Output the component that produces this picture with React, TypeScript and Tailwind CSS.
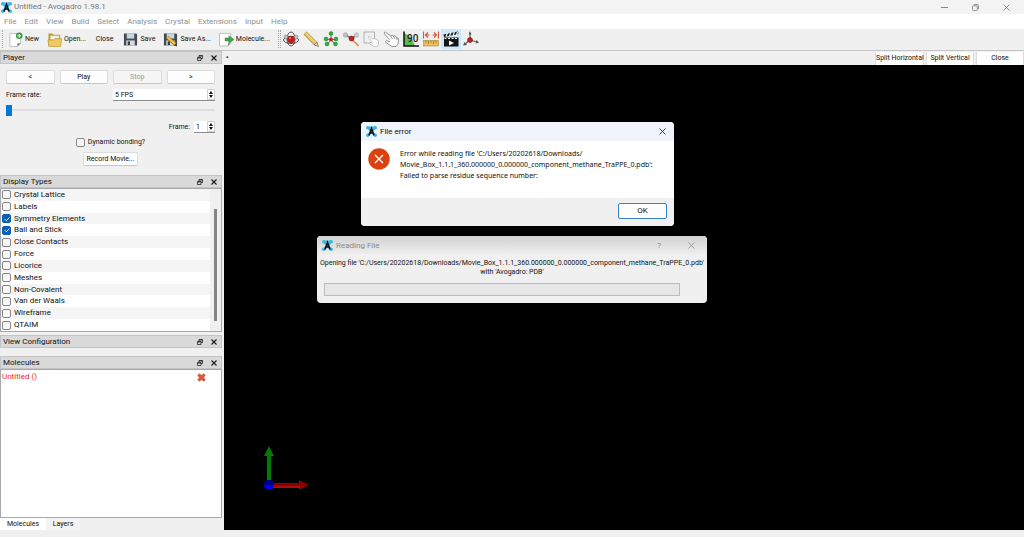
import type { ReactNode } from 'react';

const menus = ['File', 'Edit', 'View', 'Build', 'Select', 'Analysis', 'Crystal', 'Extensions', 'Input', 'Help'];

const displayTypes = [
  { name: 'Crystal Lattice', on: false },
  { name: 'Labels', on: false },
  { name: 'Symmetry Elements', on: true },
  { name: 'Ball and Stick', on: true },
  { name: 'Close Contacts', on: false },
  { name: 'Force', on: false },
  { name: 'Licorice', on: false },
  { name: 'Meshes', on: false },
  { name: 'Non-Covalent', on: false },
  { name: 'Van der Waals', on: false },
  { name: 'Wireframe', on: false },
  { name: 'QTAIM', on: false },
];

function Logo() {
  return (
    <svg viewBox="0 0 22 22" className="w-[11px] h-[11px] shrink-0">
      <path d="M3 3 L19 19 M19 3 L3 19 M4 3 H18" stroke="#35b9e6" strokeWidth="4" />
      <g fill="#35b9e6">
        <circle cx="3.5" cy="3.5" r="3.5" /><circle cx="18.5" cy="3.5" r="3.5" />
        <circle cx="3.5" cy="18.5" r="3.5" /><circle cx="18.5" cy="18.5" r="3.5" />
      </g>
      <path d="M6 19 L11 5 L16 19 M7 14 H15" fill="none" stroke="#0b1722" strokeWidth="3.4" />
    </svg>
  );
}

function CloseIcon({ className }: { className: string }) {
  return (
    <svg viewBox="0 0 8 8" className={className}>
      <path d="M0.6 0.6 L7.4 7.4 M7.4 0.6 L0.6 7.4" stroke="currentColor" strokeWidth="0.9" fill="none" />
    </svg>
  );
}

function Floppy() {
  return (
    <g>
      <path d="M2 3 H28 L30 5 V29 H2 Z" fill="#454b52" />
      <rect x="8" y="3" width="16" height="11" fill="#c3d6e4" />
      <rect x="7" y="18" width="18" height="11" fill="#d9dcde" />
      <rect x="10" y="20" width="5" height="8" fill="#3b4046" />
    </g>
  );
}

const fileIcons: Record<string, ReactNode> = {
  New: (
    <>
      <path d="M4 3 H27 V24 L20 31 H4 Z" fill="#fff" stroke="#a9a9a9" strokeWidth="1.5" />
      <path d="M20 31 V24 H27 Z" fill="#777" />
      <circle cx="24" cy="8" r="7" fill="#3f9648" />
      <path d="M24 4 V12 M20 8 H28" stroke="#dff3df" strokeWidth="2.4" />
    </>
  ),
  'Open...': (
    <>
      <path d="M3 29 V3 H12 L14 6 H28 V29 Z" fill="#c69b33" />
      <path d="M7 8 H26 V17 H7 Z" fill="#f4f4ef" stroke="#b9b9b0" />
      <path d="M2 17 H14 L17 14 H31 L29 31 H4 Z" fill="#edcb60" stroke="#b88c25" strokeWidth="1.3" />
    </>
  ),
  Save: <Floppy />,
  'Save As...': (
    <>
      <Floppy />
      <path d="M9 11 L27 27" stroke="#8a6717" strokeWidth="7" />
      <path d="M9 11 L26 26" stroke="#f2c744" strokeWidth="5" />
      <path d="M30 31 L24 28 L28 24 Z" fill="#333" />
    </>
  ),
  'Molecule...': (
    <>
      <path d="M1 3 H25 V24 L19 30 H1 Z" fill="#fff" stroke="#a9a9a9" strokeWidth="1.5" />
      <path d="M19 30 V24 H25 Z" fill="#888" />
      <path d="M13 13 H21 V8 L32 16 L21 24 V19 H13 Z" fill="#3fa648" stroke="#2a7d33" />
    </>
  ),
};

function FileButton({ label }: { label: string }) {
  const icon = fileIcons[label];
  return (
    <button className={`flex items-center gap-0.5 shrink-0 ${icon ? '' : 'px-0.5'}`}>
      {icon && <svg viewBox="0 0 32 32" className="w-[15px] h-[15px]">{icon}</svg>}
      {label}
    </button>
  );
}

const handShape = 'M13 17 L3 6 Q1 2 5 2 L15 10 Q18 6 21 10 Q25 8 27 13 Q31 13 31 18 L30 26 L26 31 H18 L7 24 Q3 21 7 19 L14 22';

const tools: { name: string; art: ReactNode }[] = [
  {
    name: 'Navigate',
    art: (
      <>
        <g fill="none" stroke="#444" strokeWidth="1.8">
          <ellipse cx="16" cy="18" rx="15" ry="7" /><ellipse cx="16" cy="16" rx="8" ry="14" />
        </g>
        <circle cx="6" cy="12" r="4" fill="#c4c4c4" stroke="#666" /><circle cx="26" cy="12" r="4" fill="#c4c4c4" stroke="#666" />
        <circle cx="16" cy="17" r="7" fill="#cc1a14" stroke="#7a1010" />
        <circle cx="14" cy="14" r="2" fill="#f08a80" />
      </>
    ),
  },
  {
    name: 'Draw',
    art: (
      <>
        <path d="M4 4 L25 25" stroke="#9a7a2a" strokeWidth="8" />
        <path d="M4 4 L25 25" stroke="#eccb62" strokeWidth="5.5" />
        <path d="M6 3 L26 23" stroke="#f8e6a0" strokeWidth="1.5" />
        <path d="M31 31 L22 28 L28 22 Z" fill="#e9d1a0" stroke="#4a3a18" />
      </>
    ),
  },
  {
    name: 'Template',
    art: (
      <>
        <path d="M16 17 V6 M16 17 L5 17 M16 17 H27 M16 17 L9 27 M16 17 L24 27" stroke="#777" strokeWidth="2" />
        <g fill="#28b83a" stroke="#14651e">
          <circle cx="16" cy="5" r="3.8" /><circle cx="6" cy="16" r="3.8" /><circle cx="26" cy="16" r="3.8" />
          <circle cx="8" cy="26" r="3.8" /><circle cx="25" cy="26" r="3.8" />
        </g>
        <circle cx="16" cy="17" r="4" fill="#c22" />
      </>
    ),
  },
  {
    name: 'Manipulate',
    art: (
      <>
        <path d="M19 18 L31 30" stroke="#d39a45" strokeWidth="3.5" />
        <path d="M5 8 L17 15 L28 8" stroke="#777" strokeWidth="3" fill="none" />
        <circle cx="5" cy="8" r="4.5" fill="#c0c0c0" stroke="#888" /><circle cx="27" cy="8" r="4.5" fill="#ccc" stroke="#999" />
        <circle cx="17" cy="15" r="5" fill="#cf1d16" stroke="#611" />
      </>
    ),
  },
  {
    name: 'Select',
    art: (
      <>
        <rect x="2" y="2" width="21" height="22" fill="#eef0f1" stroke="#9a9fa5" strokeWidth="1.5" />
        <path d={handShape} transform="translate(9 9) scale(.72)" fill="#fff" stroke="#aaa" strokeWidth="1.8" />
      </>
    ),
  },
  {
    name: 'Edit',
    art: (
      <>
        <path d={handShape} fill="#fff" stroke="#666" strokeWidth="1.4" />
        <path d="M15 10 L19 16 M21 10 L24 16 M27 13 L28 18" stroke="#666" strokeWidth="1.3" />
      </>
    ),
  },
  {
    name: 'Measure',
    art: (
      <>
        <path d="M2 30 V4 Q18 10 24 30 Z" fill="#5cb850" />
        <path d="M2 1 V30 H32" fill="none" stroke="#111" strokeWidth="3" />
        <text x="8" y="22" fontSize="20" fontWeight="500" fill="#1c1c1c">90</text>
      </>
    ),
  },
  {
    name: 'Bond length',
    art: (
      <>
        <path d="M1 1 V15 M31 1 V15" stroke="#d2553f" strokeWidth="2.4" />
        <path d="M5 8 H13 M19 8 H27 M10 3 L5 8 L10 13 M22 3 L27 8 L22 13" fill="none" stroke="#d2553f" strokeWidth="2.4" />
        <rect x="1" y="19" width="30" height="11" fill="#e7c05c" stroke="#a87a22" />
        <path d="M6 19 V24 M11 19 V26 M16 19 V24 M21 19 V26 M26 19 V24" stroke="#8d6a25" strokeWidth="1.4" />
      </>
    ),
  },
  {
    name: 'Player',
    art: (
      <>
        <path d="M1 7 L30 1 L31 6 L2 12 Z" fill="#151515" />
        <path d="M6 11 L9 4 M13 10 L16 3 M20 9 L23 2 M27 8 L29 2" stroke="#f5f5f5" strokeWidth="2.4" />
        <rect x="2" y="13" width="29" height="18" fill="#151515" />
        <path d="M3 15 H30" stroke="#f5f5f5" strokeWidth="2" strokeDasharray="4 3" />
        <path d="M12 19 L22 24 L12 29 Z" fill="#fff" />
      </>
    ),
  },
  {
    name: 'Align',
    art: (
      <>
        <path d="M14 18 V5 M14 18 L28 22 M14 18 L4 26" stroke="#666" strokeWidth="2.4" />
        <path d="M14 0 L17 7 H11 Z M32 23 L25 25 L27 18 Z M0 29 L3 22 L8 28 Z" fill="#555" />
        <circle cx="14" cy="18" r="5" fill="#c4221a" stroke="#511" />
      </>
    ),
  },
];

function DockHeader({ title }: { title: string }) {
  return (
    <div className="flex items-center h-[13px] pl-0.5 pr-1 bg-[#d9d9d9] border border-[#c4c4c4]">
      <h2 className="flex-1">{title}</h2>
      <button aria-label={`Float ${title}`} className="mr-2">
        <svg viewBox="0 0 12 12" className="w-1.5 h-1.5" fill="none" stroke="#222" strokeWidth="1.6">
          <path d="M4 4 V1 H11 V7 H8 M4 2 H11" />
          <path d="M1 5 H8 V11 H1 Z M1 6 H8" />
        </svg>
      </button>
      <button aria-label={`Close ${title}`}>
        <svg viewBox="0 0 12 12" className="w-1.5 h-1.5" stroke="#1a1a1a" strokeWidth="2.2">
          <path d="M1 1 L11 11 M11 1 L1 11" />
        </svg>
      </button>
    </div>
  );
}

function PushButton({ children, disabled }: { children: ReactNode; disabled?: boolean }) {
  return (
    <button
      disabled={disabled}
      className="h-3.5 px-0.5 flex items-center justify-center rounded-xs border border-[#dcdcdc] border-b-[#c6c6c6] bg-[#fdfdfd] disabled:bg-[#f5f5f5] disabled:text-[#9a9a9a]"
    >
      {children}
    </button>
  );
}

function CheckBox({ label, checked }: { label: string; checked?: boolean }) {
  return (
    <label className="flex items-center gap-[3px]">
      <span className="grid place-items-center *:col-start-1 *:row-start-1">
        <input
          type="checkbox"
          defaultChecked={checked}
          className="peer appearance-none w-[9px] h-[9px] rounded-xs border border-[#868686] bg-[#f7f7f7] checked:bg-[#0a5fb8] checked:border-[#0a5fb8]"
        />
        <svg viewBox="0 0 10 10" className="w-1.5 h-1.5 invisible peer-checked:visible pointer-events-none">
          <path d="M1 5 L4 8 L9 2.5" fill="none" stroke="#fff" strokeWidth="1.3" />
        </svg>
      </span>
      {label}
    </label>
  );
}

function SpinBox({ id, value, className }: { id: string; value: string; className: string }) {
  return (
    <div className={`flex h-3 bg-white border-b border-[#8c8c8c] ${className}`}>
      <input id={id} defaultValue={value} className="flex-1 min-w-0 px-0.5 outline-none" />
      <div className="flex flex-col w-2 border border-[#d0d0d0]">
        <button aria-label="Increase" className="flex-1 flex items-center justify-center">
          <svg viewBox="0 0 8 6" className="w-1 h-[3px]"><path d="M4 0 L8 6 H0 Z" fill="#111" /></svg>
        </button>
        <button aria-label="Decrease" className="flex-1 flex items-center justify-center">
          <svg viewBox="0 0 8 6" className="w-1 h-[3px]"><path d="M4 6 L8 0 H0 Z" fill="#111" /></svg>
        </button>
      </div>
    </div>
  );
}

function PlayerPanel() {
  return (
    <section>
      <DockHeader title="Player" />
      <div className="flex flex-col pl-1.5 pr-[7px] pt-1.5 pb-[9px] text-[7px]">
        <div className="grid grid-cols-4 gap-[5px]">
          <PushButton>&lt;</PushButton>
          <PushButton>Play</PushButton>
          <PushButton disabled>Stop</PushButton>
          <PushButton>&gt;</PushButton>
        </div>
        <div className="flex items-center justify-between mt-[5px]">
          <label htmlFor="rate">Frame rate:</label>
          <SpinBox id="rate" value="5 FPS" className="w-[102px]" />
        </div>
        <input
          type="range"
          aria-label="Frame position"
          min={1}
          max={100}
          defaultValue={1}
          className="mt-[3px] h-3 w-full appearance-none bg-transparent [&::-webkit-slider-runnable-track]:h-0.5 [&::-webkit-slider-runnable-track]:bg-[#dedede] [&::-webkit-slider-thumb]:appearance-none [&::-webkit-slider-thumb]:w-1.5 [&::-webkit-slider-thumb]:h-[11px] [&::-webkit-slider-thumb]:-mt-1 [&::-webkit-slider-thumb]:bg-[#0078d7]"
        />
        <div className="flex items-center justify-end gap-1 mt-[5px]">
          <label htmlFor="frame">Frame:</label>
          <SpinBox id="frame" value="1" className="w-[21px]" />
        </div>
        <div className="flex flex-col items-center gap-[5px] mt-1">
          <CheckBox label="Dynamic bonding?" />
          <PushButton>Record Movie...</PushButton>
        </div>
      </div>
    </section>
  );
}

function DisplayTypes() {
  return (
    <section>
      <DockHeader title="Display Types" />
      <div className="flex h-[144px] border border-[#a5a8ad] bg-white">
        <ul className="flex-1 flex flex-col">
          {displayTypes.map((t) => (
            <li key={t.name} className="flex-1 flex items-center pl-px odd:bg-[#f5f5f5]">
              <CheckBox label={t.name} checked={t.on} />
            </li>
          ))}
        </ul>
        <div className="w-[11px] pt-5 pb-2.5 flex justify-center bg-[#f0f0f0]">
          <div className="w-[3px] bg-[#858585]" />
        </div>
      </div>
    </section>
  );
}

function MoleculesPanel() {
  return (
    <section className="flex-1 flex flex-col">
      <DockHeader title="Molecules" />
      <div className="flex-1 border border-[#a5a8ad] bg-white">
        <div className="flex items-center justify-between h-3 mt-px pl-px pr-[15px] text-[#f5271c]">
          Untitled ()
          <button aria-label="Delete molecule">
            <svg viewBox="0 0 18 18" className="w-[9px] h-[9px]">
              <path d="M3 3 L15 15 M15 3 L3 15" stroke="#a93620" strokeWidth="6" />
              <path d="M3 3 L15 15 M15 3 L3 15" stroke="#e8583a" strokeWidth="4" />
            </svg>
          </button>
        </div>
      </div>
      <div className="flex h-3 text-[7px]">
        <button className="w-[46px] bg-white">Molecules</button>
        <button className="w-[34px] bg-[#f3f3f3]">Layers</button>
      </div>
    </section>
  );
}

function Axes() {
  return (
    <svg viewBox="0 0 50 50" className="absolute left-10 bottom-[37px] w-[50px] h-[50px]">
      <path d="M3 13 V38 H7 V13 H10 L5 3 L0 13 Z" fill="#007a00" />
      <path d="M5 40 H35 V37 L45 42 L35 47 V45 H5 Z" fill="#8b0000" />
      <path d="M9 44 H36" stroke="#d81a10" strokeWidth="1" />
      <circle cx="5" cy="42" r="5" fill="#0000f0" />
      <path d="M0 42 A5 5 0 0 1 10 42 Z" fill="#00008c" />
    </svg>
  );
}

function ErrorDialog() {
  return (
    <div role="alertdialog" aria-label="File error" className="absolute left-[137px] top-[57px] w-[313px] rounded-sm overflow-hidden bg-white">
      <div className="flex items-center gap-[3px] h-[19px] pl-[5px] pr-2 bg-[#eff3fa]">
        <Logo />
        <h2 className="flex-1">File error</h2>
        <button aria-label="Close dialog"><CloseIcon className="w-[7px] h-[7px]" /></button>
      </div>
      <div className="flex gap-2.5 pl-[7px] pt-[7px] h-[57px]">
        <svg viewBox="0 0 44 44" className="w-[22px] h-[22px] shrink-0">
          <circle cx="22" cy="22" r="21.5" fill="#dc4210" />
          <path d="M14 14 L30 30 M30 14 L14 30" stroke="#fff" strokeWidth="2.6" />
        </svg>
        <p className="font-['Noto_Sans',sans-serif] text-[7px] leading-[11px] whitespace-nowrap">
          Error while reading file 'C:/Users/20202618/Downloads/<br />
          Movie_Box_1.1.1_360.000000_0.000000_component_methane_TraPPE_0.pdb':<br />
          Failed to parse residue sequence number:
        </p>
      </div>
      <div className="flex justify-end pt-[5px] pb-[7px] pr-[7px] bg-[#f0f0f0]">
        <button className="w-[49px] h-4 flex items-center justify-center rounded-xs border border-[#3a82c8] bg-[#fdfdfd]">OK</button>
      </div>
    </div>
  );
}

function ReadingDialog() {
  return (
    <div role="dialog" aria-label="Reading File" className="absolute left-[93px] top-[171px] w-[390px] rounded-sm overflow-hidden bg-[#f0f0f0] pb-[7px]">
      <div className="flex items-center gap-[3px] h-[19px] pl-[5px] pr-3 text-[#8a8a8a] bg-linear-to-b from-[#d2d2d2] to-[#efefef]">
        <Logo />
        <h2 className="flex-1">Reading File</h2>
        <button aria-label="Help" className="mr-6">?</button>
        <button aria-label="Close dialog"><CloseIcon className="w-[7px] h-[7px]" /></button>
      </div>
      <p className="mt-1 text-center text-[7px] leading-[9px] whitespace-nowrap">
        Opening file 'C:/Users/20202618/Downloads/Movie_Box_1.1.1_360.000000_0.000000_component_methane_TraPPE_0.pdb'<br />
        with 'Avogadro: PDB'
      </p>
      <progress
        aria-label="Reading progress"
        value={0}
        max={100}
        className="block appearance-none ml-[7px] mt-1.5 w-[356px] h-[13px] border border-[#bcbcbc] bg-[#e6e6e6] [&::-webkit-progress-bar]:bg-[#e6e6e6]"
      />
    </div>
  );
}

export default function App() {
  return (
    <div className="min-h-screen flex flex-col bg-[#f0f0f0] font-[Roboto,sans-serif] text-[8px] leading-[10px] text-[#111]">
      <header>
        <div className="flex items-center h-3.5 pl-px pr-3.5 gap-0.5 bg-[#f3f3f3] text-[#777]">
          <Logo />
          <h1 className="flex-1">Untitled - Avogadro 1.98.1</h1>
          <div className="flex items-center gap-6">
            <button aria-label="Minimize">
              <svg viewBox="0 0 8 8" className="w-[7px] h-[7px]"><path d="M0 4 H8" stroke="currentColor" /></svg>
            </button>
            <button aria-label="Restore">
              <svg viewBox="0 0 8 8" className="w-[7px] h-[7px]" fill="none" stroke="currentColor" strokeWidth="0.9">
                <rect x="0.5" y="2" width="5.5" height="5.5" rx="1" />
                <path d="M2 0.6 H6 Q7.4 0.6 7.4 2 V6" />
              </svg>
            </button>
            <button aria-label="Close window"><CloseIcon className="w-[7px] h-[7px]" /></button>
          </div>
        </div>
        <nav className="flex items-center gap-2 h-[15px] pl-1 bg-white text-[#8f8f8f]">
          {menus.map((m) => <button key={m}>{m}</button>)}
        </nav>
        <div className="flex items-center h-[22px] pl-0.5 pb-px border-b border-[#c4c4c4]">
          <div className="w-0.5 h-[18px] mr-1 border-l border-dotted border-[#aaa]" />
          <div className="flex items-center gap-2 text-[7px]">
            {['New', 'Open...', 'Close', 'Save', 'Save As...', 'Molecule...'].map((l) => <FileButton key={l} label={l} />)}
          </div>
          <div className="w-[3px] h-[18px] ml-2 border-x border-dotted border-[#aaa]" />
          <div className="flex items-center">
            {tools.map((t) => (
              <button
                key={t.name}
                aria-label={t.name}
                aria-pressed={t.name === 'Player'}
                className="w-5 h-5 flex items-center justify-center aria-pressed:bg-[#cce8ff]"
              >
                <svg viewBox="0 0 32 32" className="w-4 h-4">{t.art}</svg>
              </button>
            ))}
          </div>
        </div>
      </header>

      <main className="flex-1 flex">
        <aside className="w-[222px] shrink-0 flex flex-col">
          <PlayerPanel />
          <DisplayTypes />
          <div className="mt-[3px] mb-2"><DockHeader title="View Configuration" /></div>
          <MoleculesPanel />
        </aside>
        <div className="flex-1 min-w-0 ml-0.5 flex flex-col">
          <div className="flex items-center h-3.5 pl-0.5 gap-0.5 text-[7px]">
            <span className="flex-1 font-bold">•</span>
            <button className="w-[49px] h-[13px] bg-[#fdfdfd] border-x border-[#dcdcdc] whitespace-nowrap">Split Horizontal</button>
            <button className="w-12 h-[13px] bg-[#fdfdfd] border-x border-[#dcdcdc] whitespace-nowrap">Split Vertical</button>
            <button className="w-12 h-[13px] bg-[#fdfdfd] border-x border-[#dcdcdc]">Close</button>
          </div>
          <div className="relative flex-1 bg-black">
            <Axes />
            <ErrorDialog />
            <ReadingDialog />
          </div>
        </div>
      </main>
      <footer className="h-[7px]" />
    </div>
  );
}
